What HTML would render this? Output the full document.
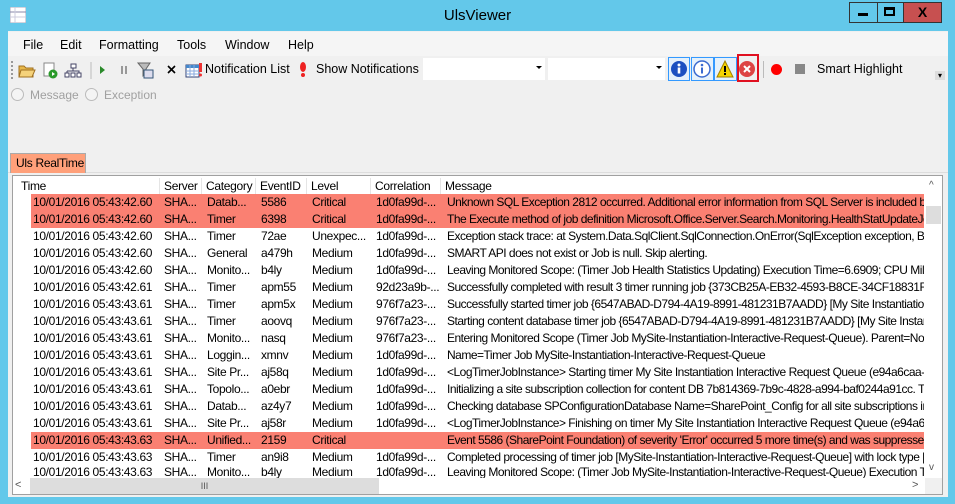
<!DOCTYPE html>
<html><head><style>
*{margin:0;padding:0;box-sizing:border-box}
body{width:955px;height:504px;background:#63c8ea;font-family:"Liberation Sans",sans-serif;font-size:12px;color:#000;position:relative;overflow:hidden}
.abs{position:absolute}
.title{left:0;top:0;width:955px;height:31px;text-align:center;line-height:32px;font-size:15px;color:#000}
.client{left:8px;top:31px;width:940px;height:466px;background:#f0f0f0}
.menu span{position:absolute;top:6px;font-size:12.5px}
.tb{left:8px;top:57px;width:932px;height:24px;background:#f0f0f0}
.list{left:12px;top:175px;width:931px;height:320px;background:#fff;border:1px solid #a0a0a0}
.hdr{position:absolute;top:2px;height:16px;border-right:1px solid #e5e5e5;padding-left:4px;line-height:16px;font-size:12px;letter-spacing:-0.3px}
.row{position:absolute;left:18px;width:906px;height:17px;line-height:17px;font-size:12px;letter-spacing:-0.35px;white-space:nowrap;overflow:hidden}
.row span{position:absolute;top:0}
.row span:last-child{letter-spacing:-0.5px}
.crit{background:#fa8072}
</style></head><body>
<div class="abs title">UlsViewer</div>
<svg class="abs" style="left:10px;top:7px" width="16" height="16"><rect x="0" y="0" width="16" height="16" fill="#fff" stroke="#aab"/><line x1="0" y1="5" x2="16" y2="5" stroke="#88a"/><line x1="0" y1="10" x2="16" y2="10" stroke="#ccd"/><line x1="5" y1="0" x2="5" y2="16" stroke="#ccd"/></svg>
<div class="abs" style="left:849px;top:2px;width:93px;height:21px;border:1px solid #333;background:#63c8ea"></div>
<div class="abs" style="left:877px;top:2px;width:1px;height:21px;background:#333"></div>
<div class="abs" style="left:903px;top:2px;width:39px;height:21px;background:#c75050;border:1px solid #333;color:#000;text-align:center;font-weight:bold;font-size:14px;line-height:19px">X</div>
<div class="abs" style="left:858px;top:13px;width:10px;height:3px;background:#000"></div>
<div class="abs" style="left:884px;top:7px;width:11px;height:9px;border:2px solid #000;border-top-width:3px"></div>
<div class="abs client"></div>
<div class="abs" style="left:8px;top:32px;width:940px;height:24px;background:#f5f5f5"></div>
<div class="menu abs" style="left:0;top:32px;width:955px;height:24px">
<span style="left:23px">File</span><span style="left:60px">Edit</span><span style="left:99px">Formatting</span><span style="left:177px">Tools</span><span style="left:225px">Window</span><span style="left:288px">Help</span></div>
<div class="abs tb"></div>
<div class="abs" style="left:11px;top:61px;width:2px;height:18px;border-left:2px dotted #999"></div>
<svg class="abs" style="left:18px;top:61px" width="200" height="18">
<path d="M1 5h5l2 2h7v9H1z" fill="#e8b84a" stroke="#a07020"/><path d="M3 9h14l-3 7H1z" fill="#f5d27a" stroke="#a07020"/>
<rect x="26" y="2" width="10" height="13" fill="#fff" stroke="#888"/><circle cx="35" cy="13" r="4.5" fill="#2a9a2a"/><path d="M34 11l3 2-3 2z" fill="#fff"/>
<rect x="53" y="3" width="5" height="4" fill="#fff" stroke="#446"/><rect x="47" y="12" width="4" height="4" fill="#fff" stroke="#446"/><rect x="53" y="12" width="4" height="4" fill="#fff" stroke="#446"/><rect x="59" y="12" width="4" height="4" fill="#fff" stroke="#446"/><path d="M55 7v3M49 10h12v2M49 10v2" stroke="#446" fill="none"/>
<line x1="73" y1="1" x2="73" y2="18" stroke="#bbb"/>
<path d="M82 5l5 4-5 4z" fill="#2a8a2a"/>
<rect x="103" y="5" width="2" height="8" fill="#999"/><rect x="107" y="5" width="2" height="8" fill="#999"/>
<path d="M120 2h12l-4 6v5l-3 2v-7z" fill="#bbb" stroke="#666"/><rect x="126" y="9" width="9" height="8" fill="#dde" stroke="#357"/>
<path d="M150 5l7 7M157 5l-7 7" stroke="#000" stroke-width="1.6"/>
<rect x="168" y="4" width="13" height="12" fill="#fff" stroke="#347"/><rect x="168" y="4" width="13" height="3" fill="#48c"/><path d="M172 4v12M176 4v12M168 10h13M168 13h13" stroke="#8ad"/><rect x="181" y="2" width="3" height="9" fill="#e33"/><circle cx="182.5" cy="14" r="1.5" fill="#e33"/>
</svg>
<div class="abs" style="left:205px;top:62px;font-size:12.5px">Notification List</div>
<svg class="abs" style="left:299px;top:62px" width="8" height="16"><ellipse cx="4" cy="5" rx="3" ry="5" fill="#e22"/><circle cx="4" cy="13" r="2" fill="#e22"/></svg>
<div class="abs" style="left:316px;top:62px;font-size:12.5px">Show Notifications</div>
<div class="abs" style="left:423px;top:58px;width:122px;height:22px;background:#fff"></div>
<div class="abs" style="left:548px;top:58px;width:117px;height:22px;background:#fff"></div>
<div class="abs" style="left:536px;top:66px;border:3px solid transparent;border-top:3px solid #000"></div>
<div class="abs" style="left:656px;top:66px;border:3px solid transparent;border-top:3px solid #000"></div>
<div class="abs" style="left:668px;top:57px;width:22px;height:24px;border:1px solid #3399ff;background:#e5f1fb"></div>
<div class="abs" style="left:691px;top:57px;width:23px;height:24px;border:1px solid #3399ff;background:#e5f1fb"></div>
<div class="abs" style="left:714px;top:57px;width:23px;height:24px;border:1px solid #3399ff;background:#e5f1fb"></div>
<div class="abs" style="left:737px;top:54px;width:22px;height:28px;border:2px solid #e01020"></div>
<svg class="abs" style="left:670px;top:60px" width="90" height="18">
<circle cx="9" cy="9" r="8" fill="#1c50c0"/><circle cx="9" cy="5" r="1.5" fill="#fff"/><rect x="7.7" y="7.5" width="2.6" height="6" fill="#fff"/>
<circle cx="32" cy="9" r="8" fill="#fff" stroke="#3a6ad0" stroke-width="1.5"/><circle cx="32" cy="5" r="1.3" fill="#3a6ad0"/><rect x="31" y="7.5" width="2" height="6" fill="#3a6ad0"/>
<path d="M55 1l8 16H47z" fill="#f5d400" stroke="#a08000"/><rect x="54" y="6" width="2" height="6" fill="#000"/><rect x="54" y="13" width="2" height="2" fill="#000"/>
<circle cx="77" cy="9" r="8" fill="#d44"/><path d="M74 6l6 6M80 6l-6 6" stroke="#fff" stroke-width="2"/>
</svg>
<div class="abs" style="left:763px;top:61px;width:1px;height:17px;background:#bbb"></div>
<div class="abs" style="left:771px;top:64px;width:11px;height:11px;border-radius:50%;background:#f00"></div>
<div class="abs" style="left:795px;top:64px;width:10px;height:10px;background:#888"></div>
<div class="abs" style="left:817px;top:62px;font-size:12.5px">Smart Highlight</div>
<div class="abs" style="left:935px;top:71px;width:10px;height:9px;background:#ddd;font-size:8px;line-height:9px;text-align:center">▾</div>
<div class="abs" style="left:11px;top:88px;width:13px;height:13px;border:1px solid #bbb;border-radius:50%;background:#f4f4f4"></div>
<div class="abs" style="left:30px;top:88px;color:#a0a0a0">Message</div>
<div class="abs" style="left:85px;top:88px;width:13px;height:13px;border:1px solid #bbb;border-radius:50%;background:#f4f4f4"></div>
<div class="abs" style="left:104px;top:88px;color:#a0a0a0">Exception</div>
<div class="abs" style="left:8px;top:172px;width:940px;height:1px;background:#ddd"></div>
<div class="abs" style="left:10px;top:153px;width:76px;height:20px;background:#ffa07a;border:1px solid #aaa;border-bottom:none;padding-left:5px;line-height:18px;white-space:nowrap;letter-spacing:-0.3px">Uls RealTime</div>
<div class="abs list"></div>
<div class="abs" style="left:13px;top:176px;width:912px;height:17px;background:#fff">
<div class="hdr" style="left:4px;width:143px">Time</div><div class="hdr" style="left:147px;width:42px">Server</div><div class="hdr" style="left:189px;width:54px">Category</div><div class="hdr" style="left:243px;width:51px">EventID</div><div class="hdr" style="left:294px;width:64px">Level</div><div class="hdr" style="left:358px;width:70px">Correlation</div><div class="hdr" style="left:428px;width:484px;border:none">Message</div>
</div>
<div class="row crit" style="top:194px;left:31px;width:893px"></div>
<div class="row crit" style="top:211px;left:31px;width:893px"></div>
<div class="row crit" style="top:432px;left:31px;width:893px"></div>
<div class="abs" style="left:925px;top:177px;width:17px;height:300px;background:#fff"></div>
<div class="abs" style="left:929px;top:180px;font-size:10px;color:#555">^</div>
<div class="abs" style="left:926px;top:206px;width:15px;height:18px;background:#ddd"></div>
<div class="abs" style="left:929px;top:462px;font-size:10px;color:#555">v</div>
<div class="abs" style="left:13px;top:478px;width:912px;height:16px;background:#fff"></div>
<div class="abs" style="left:30px;top:478px;width:349px;height:16px;background:#ddd;text-align:center;font-size:9px;line-height:16px;color:#555">III</div>
<div class="abs" style="left:15px;top:479px;font-size:11px;color:#555">&lt;</div>
<div class="abs" style="left:912px;top:479px;font-size:11px;color:#555">&gt;</div>
<div class="abs" style="left:925px;top:478px;width:17px;height:16px;background:#f0f0f0"></div>
<div>
<div class="row" style="top:194px"><span style="left:15px">10/01/2016 05:43:42.60</span><span style="left:146px">SHA...</span><span style="left:189px">Datab...</span><span style="left:243px">5586</span><span style="left:294px">Critical</span><span style="left:358px">1d0fa99d-...</span><span style="left:429px">Unknown SQL Exception 2812 occurred. Additional error information from SQL Server is included below</span></div>
<div class="row" style="top:211px"><span style="left:15px">10/01/2016 05:43:42.60</span><span style="left:146px">SHA...</span><span style="left:189px">Timer</span><span style="left:243px">6398</span><span style="left:294px">Critical</span><span style="left:358px">1d0fa99d-...</span><span style="left:429px">The Execute method of job definition Microsoft.Office.Server.Search.Monitoring.HealthStatUpdateJob</span></div>
<div class="row" style="top:228px"><span style="left:15px">10/01/2016 05:43:42.60</span><span style="left:146px">SHA...</span><span style="left:189px">Timer</span><span style="left:243px">72ae</span><span style="left:294px">Unexpec...</span><span style="left:358px">1d0fa99d-...</span><span style="left:429px">Exception stack trace:    at System.Data.SqlClient.SqlConnection.OnError(SqlException exception, Bo</span></div>
<div class="row" style="top:245px"><span style="left:15px">10/01/2016 05:43:42.60</span><span style="left:146px">SHA...</span><span style="left:189px">General</span><span style="left:243px">a479h</span><span style="left:294px">Medium</span><span style="left:358px">1d0fa99d-...</span><span style="left:429px">SMART API does not exist or Job is null. Skip alerting.</span></div>
<div class="row" style="top:262px"><span style="left:15px">10/01/2016 05:43:42.60</span><span style="left:146px">SHA...</span><span style="left:189px">Monito...</span><span style="left:243px">b4ly</span><span style="left:294px">Medium</span><span style="left:358px">1d0fa99d-...</span><span style="left:429px">Leaving Monitored Scope: (Timer Job Health Statistics Updating) Execution Time=6.6909; CPU Millise</span></div>
<div class="row" style="top:279px"><span style="left:15px">10/01/2016 05:43:42.61</span><span style="left:146px">SHA...</span><span style="left:189px">Timer</span><span style="left:243px">apm55</span><span style="left:294px">Medium</span><span style="left:358px">92d23a9b-...</span><span style="left:429px">Successfully completed with result 3 timer running job {373CB25A-EB32-4593-B8CE-34CF18831F66} f</span></div>
<div class="row" style="top:296px"><span style="left:15px">10/01/2016 05:43:43.61</span><span style="left:146px">SHA...</span><span style="left:189px">Timer</span><span style="left:243px">apm5x</span><span style="left:294px">Medium</span><span style="left:358px">976f7a23-...</span><span style="left:429px">Successfully started timer job {6547ABAD-D794-4A19-8991-481231B7AADD} [My Site Instantiation I</span></div>
<div class="row" style="top:313px"><span style="left:15px">10/01/2016 05:43:43.61</span><span style="left:146px">SHA...</span><span style="left:189px">Timer</span><span style="left:243px">aoovq</span><span style="left:294px">Medium</span><span style="left:358px">976f7a23-...</span><span style="left:429px">Starting content database timer job {6547ABAD-D794-4A19-8991-481231B7AADD} [My Site Instantia</span></div>
<div class="row" style="top:330px"><span style="left:15px">10/01/2016 05:43:43.61</span><span style="left:146px">SHA...</span><span style="left:189px">Monito...</span><span style="left:243px">nasq</span><span style="left:294px">Medium</span><span style="left:358px">976f7a23-...</span><span style="left:429px">Entering Monitored Scope (Timer Job MySite-Instantiation-Interactive-Request-Queue). Parent=None</span></div>
<div class="row" style="top:347px"><span style="left:15px">10/01/2016 05:43:43.61</span><span style="left:146px">SHA...</span><span style="left:189px">Loggin...</span><span style="left:243px">xmnv</span><span style="left:294px">Medium</span><span style="left:358px">1d0fa99d-...</span><span style="left:429px">Name=Timer Job MySite-Instantiation-Interactive-Request-Queue</span></div>
<div class="row" style="top:364px"><span style="left:15px">10/01/2016 05:43:43.61</span><span style="left:146px">SHA...</span><span style="left:189px">Site Pr...</span><span style="left:243px">aj58q</span><span style="left:294px">Medium</span><span style="left:358px">1d0fa99d-...</span><span style="left:429px">&lt;LogTimerJobInstance&gt; Starting timer My Site Instantiation Interactive Request Queue (e94a6caa-b0f</span></div>
<div class="row" style="top:381px"><span style="left:15px">10/01/2016 05:43:43.61</span><span style="left:146px">SHA...</span><span style="left:189px">Topolo...</span><span style="left:243px">a0ebr</span><span style="left:294px">Medium</span><span style="left:358px">1d0fa99d-...</span><span style="left:429px">Initializing a site subscription collection for content DB 7b814369-7b9c-4828-a994-baf0244a91cc. Tha</span></div>
<div class="row" style="top:398px"><span style="left:15px">10/01/2016 05:43:43.61</span><span style="left:146px">SHA...</span><span style="left:189px">Datab...</span><span style="left:243px">az4y7</span><span style="left:294px">Medium</span><span style="left:358px">1d0fa99d-...</span><span style="left:429px">Checking database SPConfigurationDatabase Name=SharePoint_Config for all site subscriptions in co</span></div>
<div class="row" style="top:415px"><span style="left:15px">10/01/2016 05:43:43.61</span><span style="left:146px">SHA...</span><span style="left:189px">Site Pr...</span><span style="left:243px">aj58r</span><span style="left:294px">Medium</span><span style="left:358px">1d0fa99d-...</span><span style="left:429px">&lt;LogTimerJobInstance&gt; Finishing on timer My Site Instantiation Interactive Request Queue (e94a6caa</span></div>
<div class="row" style="top:432px"><span style="left:15px">10/01/2016 05:43:43.63</span><span style="left:146px">SHA...</span><span style="left:189px">Unified...</span><span style="left:243px">2159</span><span style="left:294px">Critical</span><span style="left:358px"></span><span style="left:429px">Event 5586 (SharePoint Foundation) of severity 'Error' occurred 5 more time(s) and was suppressed in</span></div>
<div class="row" style="top:449px"><span style="left:15px">10/01/2016 05:43:43.63</span><span style="left:146px">SHA...</span><span style="left:189px">Timer</span><span style="left:243px">an9i8</span><span style="left:294px">Medium</span><span style="left:358px">1d0fa99d-...</span><span style="left:429px">Completed processing of timer job [MySite-Instantiation-Interactive-Request-Queue] with lock type [Cor</span></div>
<div class="row" style="top:464px;height:14px"><span style="left:15px">10/01/2016 05:43:43.63</span><span style="left:146px">SHA...</span><span style="left:189px">Monito...</span><span style="left:243px">b4ly</span><span style="left:294px">Medium</span><span style="left:358px">1d0fa99d-...</span><span style="left:429px">Leaving Monitored Scope: (Timer Job MySite-Instantiation-Interactive-Request-Queue) Execution Time</span></div>
</div>
</body></html>
